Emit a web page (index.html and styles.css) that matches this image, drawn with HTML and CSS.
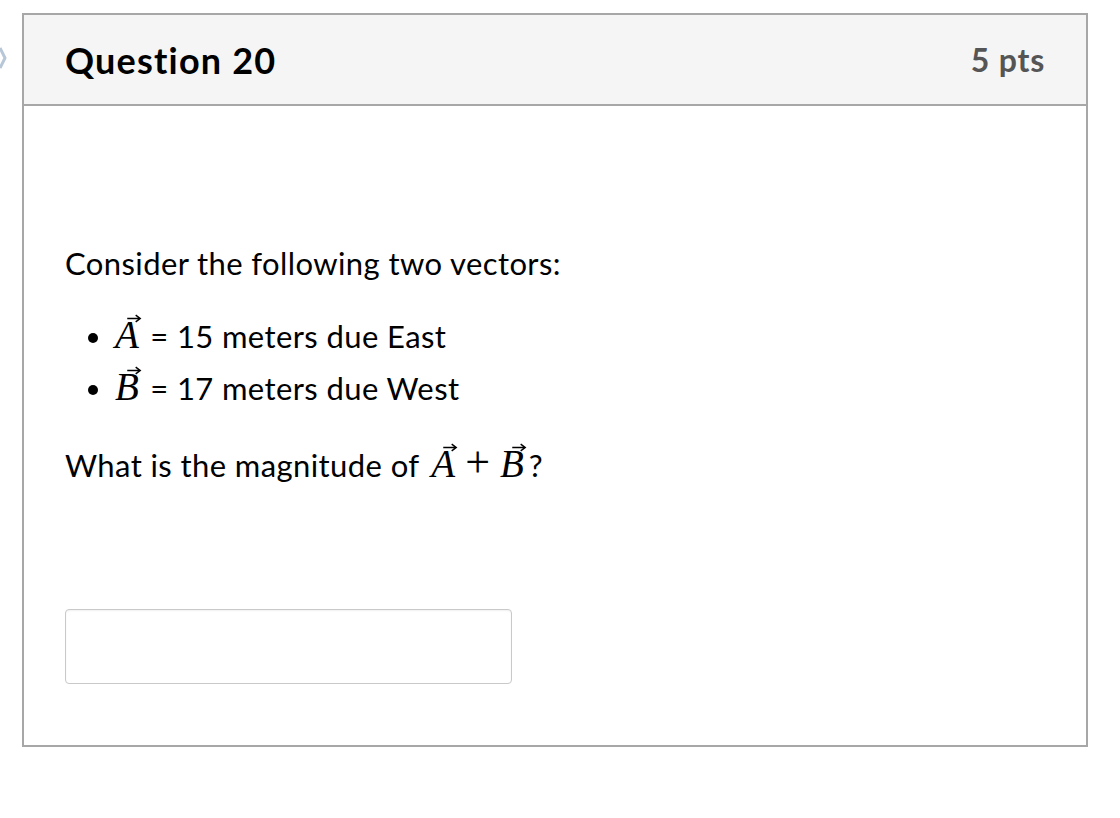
FILE: index.html
```html
<!DOCTYPE html>
<html>
<head>
<meta charset="utf-8">
<link rel="stylesheet" href="styles.css">
</head>
<body>
<div class="edge-mark"><svg width="8" height="24" viewBox="0 0 8 24"><path d="M0 2 L5 12 L0 22" fill="none" stroke="#b7c7d8" stroke-width="3" stroke-linejoin="round"/></svg></div>
<div class="card">
  <div class="card-header">
    <h2 class="title">Question 20</h2>
    <span class="pts">5 pts</span>
  </div>
  <div class="card-body">
    <p class="intro">Consider the following two vectors:</p>
    <ul class="vectors">
      <li><span class="vec">A<svg class="arrow" viewBox="0 0 14 8"><path d="M1 4 H12 M8.5 1 L12.5 4 L8.5 7" fill="none" stroke="#000" stroke-width="1.3"/></svg></span> = 15 meters due East</li>
      <li><span class="vec">B<svg class="arrow" viewBox="0 0 14 8"><path d="M1 4 H12 M8.5 1 L12.5 4 L8.5 7" fill="none" stroke="#000" stroke-width="1.3"/></svg></span> = 17 meters due West</li>
    </ul>
    <p class="question">What is the magnitude of <span class="vec">A<svg class="arrow" viewBox="0 0 14 8"><path d="M1 4 H12 M8.5 1 L12.5 4 L8.5 7" fill="none" stroke="#000" stroke-width="1.3"/></svg></span><span class="plus">+</span><span class="vec">B<svg class="arrow" viewBox="0 0 14 8"><path d="M1 4 H12 M8.5 1 L12.5 4 L8.5 7" fill="none" stroke="#000" stroke-width="1.3"/></svg></span>?</p>
    <div class="answer"></div>
  </div>
</div>
</body>
</html>
```

FILE: styles.css
```css
html, body {
  margin: 0;
  padding: 0;
  background: #ffffff;
}
body {
  font-family: Lato, "Noto Sans", sans-serif;
  color: #000;
  padding: 13px 32px 0 22px;
}
.edge-mark {
  position: absolute;
  left: 0;
  top: 46px;
}
.card {
  width: 1062px;
  border: 2px solid #a7a7a7;
  background: #fff;
}
.card-header {
  height: 89px;
  background: #f5f5f5;
  border-bottom: 2px solid #a7a7a7;
  display: flex;
  align-items: center;
  justify-content: space-between;
  padding: 0 41px 0 41px;
}
.title {
  margin: 0;
  font-size: 36px;
  font-weight: 700;
  color: #000;
  letter-spacing: 1.2px;
}
.pts {
  font-size: 32px;
  font-weight: 700;
  color: #555;
  letter-spacing: 0.8px;
}
.card-body {
  padding: 135px 41px 61px 41px;
  font-size: 31px;
  letter-spacing: 0.4px;
}
.intro {
  margin: 0;
  line-height: 44px;
}
.vectors {
  margin: 25px 0 0 0;
  padding-left: 50px;
  line-height: 52px;
}
.vectors li {
  list-style: disc;
}
.question {
  margin: 25px 0 0 0;
  line-height: 52px;
}
.vec {
  position: relative;
  font-family: "Liberation Serif", "DejaVu Serif", serif;
  font-style: italic;
  font-size: 39px;
  line-height: 0;
  letter-spacing: 0;
  padding-right: 3px;
}
.question .vec:first-child {
  margin-left: 4px;
}
.question .vec:last-child {
  padding-right: 5px;
}
.arrow {
  position: absolute;
  left: 11px;
  top: 1px;
  width: 16px;
  height: 9px;
}
.plus {
  font-family: "Liberation Serif", serif;
  font-size: 44px;
  line-height: 0;
  margin: 0 10px 0 7px;
  letter-spacing: 0;
}
.answer {
  margin-top: 118px;
  width: 445px;
  height: 73px;
  border: 1px solid #c9c9c9;
  border-radius: 4px;
  box-shadow: inset 0 1px 2px rgba(0,0,0,0.06);
}
```
